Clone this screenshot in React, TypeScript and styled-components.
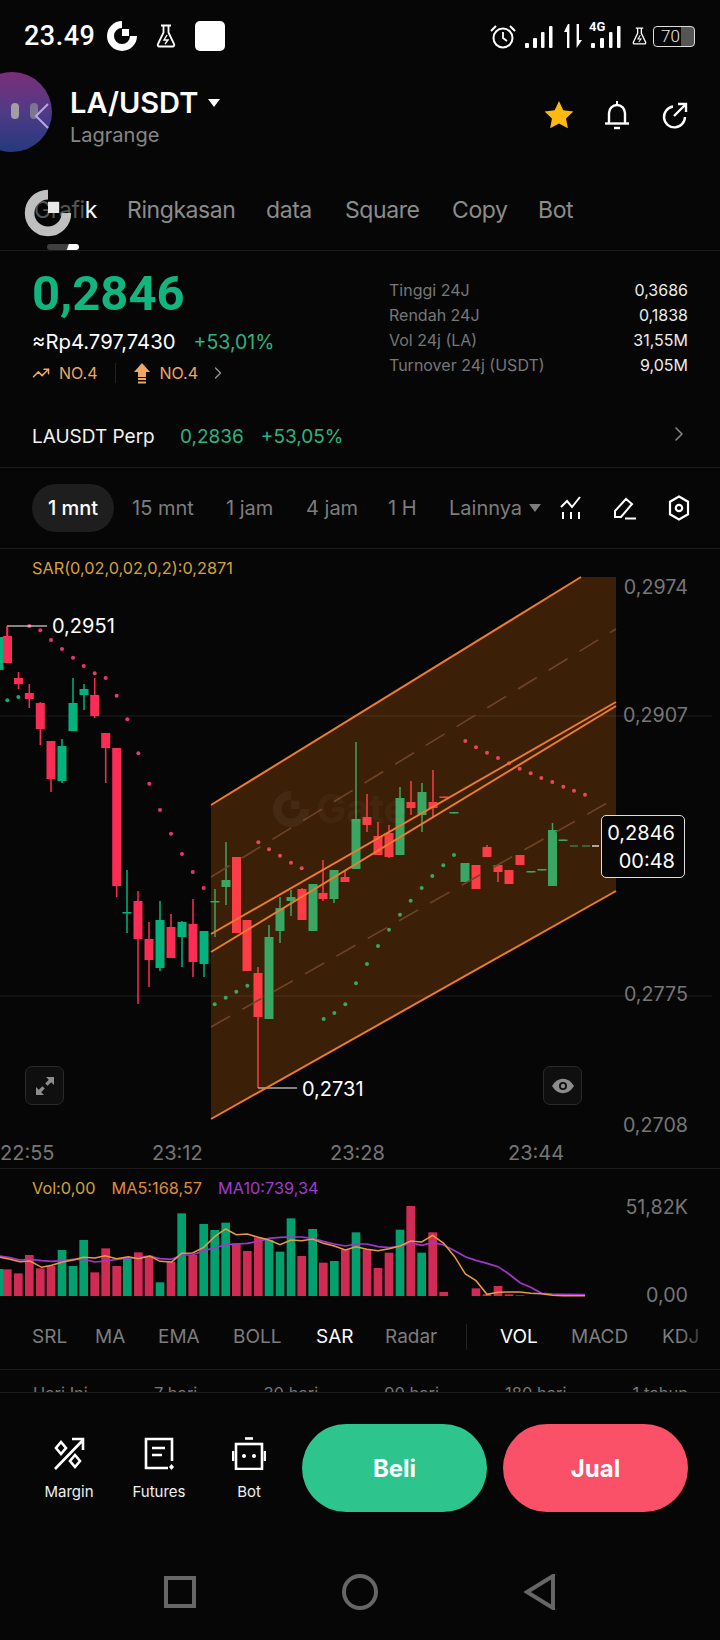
import { createGlobalStyle, styled } from "styled-components";
import { ChevronRight, TrendingUp } from "lucide-react";

const GlobalStyle = createGlobalStyle`
  html, body {
    margin: 0;
    padding: 0;
    background: #060606;
  }
  * {
    box-sizing: border-box;
  }
`;

const Page = styled.div`
  position: relative;
  width: 720px;
  height: 1640px;
  overflow: hidden;
  display: flex;
  flex-direction: column;
  background: #060606;
  color: #fff;
  font-family: Inter, "Liberation Sans", sans-serif;
`;

/* status bar */
const StatusBar = styled.div`
  height: 72px;
  flex: none;
  display: flex;
  align-items: center;
  padding: 0 25px 0 24px;
`;
const Clock = styled.span`
  font-size: 27px;
  font-weight: 500;
  width: 83px;
  font-family: Roboto, sans-serif;
  letter-spacing: 0.5px;
`;
const StatusLeft = styled.div`
  display: flex;
  align-items: center;
  gap: 19px;
`;
const WhiteSquare = styled.div`
  width: 30px;
  height: 30px;
  border-radius: 5px;
  background: #fff;
`;
const StatusRight = styled.div`
  margin-left: auto;
  display: flex;
  align-items: center;
`;
const StatusSlot = styled.span<{ $ml: number }>`
  position: relative;
  display: flex;
  margin-left: ${(p) => p.$ml}px;
`;
const NetworkTag = styled.span`
  position: absolute;
  left: 0;
  top: -3px;
  font-family: Roboto, sans-serif;
  font-size: 13px;
  font-weight: 700;
  line-height: 14px;
`;
const Battery = styled.div`
  width: 42px;
  height: 21px;
  border: 1.5px solid #ddd;
  border-radius: 4px;
  margin-left: 6px;
  display: flex;
  align-items: center;
  padding-left: 7px;
  font-size: 17px;
  font-weight: 300;
  font-family: Roboto, sans-serif;
  color: #eee;
  background: linear-gradient(90deg, #060606 68%, #555 68%);
`;

/* header */
const Header = styled.div`
  height: 80px;
  flex: none;
  display: flex;
  align-items: center;
  padding-right: 32px;
`;
const Avatar = styled.div`
  position: relative;
  width: 80px;
  height: 80px;
  margin-left: -28px;
  margin-right: 18px;
  border-radius: 50%;
  flex: none;
  background: linear-gradient(180deg, #7a2f78 0%, #503a86 50%, #243a7c 100%);
`;
const AvatarPill = styled.span<{ $x: number; $dim?: boolean }>`
  position: absolute;
  left: ${(p) => p.$x}px;
  top: 31px;
  width: 8px;
  height: 16px;
  border-radius: 4px;
  background: ${(p) => (p.$dim ? "#7d7690" : "#a29ea2")};
`;
const BackIcon = styled.svg`
  position: absolute;
  left: 61px;
  top: 30px;
`;
const TitleBlock = styled.div`
  display: flex;
  flex-direction: column;
  gap: 2px;
  margin-top: 10px;
`;
const PairRow = styled.div`
  display: flex;
  align-items: center;
  gap: 10px;
`;
const Pair = styled.span`
  font-size: 29px;
  font-weight: 600;
  line-height: 34px;
`;
const Caret = styled.span`
  width: 0;
  height: 0;
  border-left: 6px solid transparent;
  border-right: 6px solid transparent;
  border-top: 8px solid ${(p) => p.color || "#fff"};
`;
const CoinName = styled.span`
  font-size: 20px;
  color: #868686;
  line-height: 26px;
`;
const HeaderIcons = styled.div`
  margin-left: auto;
  display: flex;
  align-items: center;
  gap: 31px;
  margin-top: 6px;
`;
const StarIcon = styled.svg`
  margin-right: -2px;
`;

/* tabs */
const Tabs = styled.div`
  position: relative;
  height: 99px;
  flex: none;
  display: flex;
  align-items: flex-start;
  padding: 43px 0 0 34px;
  border-bottom: 1px solid #1c1c1c;
`;
const Tab = styled.span<{ $w: number }>`
  width: ${(p) => p.$w}px;
  flex: none;
  font-size: 23px;
  line-height: 30px;
  color: #8c8c8c;
  letter-spacing: -0.42px;
`;
const TabDim = styled.span`
  color: #555;
`;
const TabLit = styled.span`
  color: #fff;
`;
const Loader = styled.svg`
  position: absolute;
  left: 24px;
  top: 37px;
`;
const TabMark = styled.div`
  position: absolute;
  left: 47px;
  bottom: 0;
  width: 32px;
  height: 6px;
  border-radius: 3px;
  background: linear-gradient(110deg, #3f3f3f 62%, #fff 66%);
`;

/* price block */
const PriceBlock = styled.div`
  height: 166px;
  flex: none;
  display: flex;
  padding: 0 32px;
`;
const PriceLeft = styled.div`
  width: 357px;
  flex: none;
  padding-top: 14px;
`;
const BigPrice = styled.div`
  font-family: Roboto, sans-serif;
  font-size: 49px;
  font-weight: 700;
  line-height: 58px;
  color: #10b57f;
`;
const FiatRow = styled.div`
  display: flex;
  gap: 18px;
  align-items: baseline;
  margin-top: 5px;
  font-size: 20.3px;
  line-height: 28px;
`;
const Green = styled.span<{ $size?: number }>`
  color: #2eb382;
  font-size: ${(p) => p.$size || 19.5}px;
`;
const RankRow = styled.div`
  display: flex;
  align-items: center;
  margin-top: 5px;
  height: 24px;
  color: #eea764;
  font-size: 16px;
`;
const RankText = styled.span`
  margin-left: 9px;
`;
const RankDivider = styled.span`
  width: 1px;
  height: 20px;
  background: #222;
  margin: 0 17px;
`;
const RankArrow = styled(ChevronRight)`
  margin-left: 10px;
`;
const Stats = styled.div`
  flex: 1;
  padding-top: 26px;
  display: flex;
  flex-direction: column;
`;
const StatRow = styled.div`
  height: 25px;
  display: flex;
  align-items: center;
  justify-content: space-between;
  font-size: 16px;
`;
const StatLabel = styled.span`
  color: #777;
`;
const StatValue = styled.span`
  color: #ececec;
`;

/* perp row */
const PerpRow = styled.div`
  height: 51px;
  flex: none;
  display: flex;
  align-items: center;
  padding: 0 32px 12px;
  border-bottom: 1px solid #1c1c1c;
  font-size: 19px;
`;
const PerpName = styled.span`
  width: 148px;
  color: #f2f2f2;
`;
const PerpChange = styled(Green)`
  margin-left: 17px;
`;
const PerpArrow = styled(ChevronRight)`
  margin-left: auto;
  margin-right: -3px;
  margin-top: -4px;
`;

/* interval row */
const Intervals = styled.div`
  position: relative;
  height: 81px;
  flex: none;
  display: flex;
  align-items: center;
  padding: 0 30px 0 32px;
  border-bottom: 1px solid #1c1c1c;
`;
const IntervalPill = styled.span`
  width: 82px;
  height: 48px;
  border-radius: 24px;
  background: #1e1e1e;
  display: flex;
  align-items: center;
  justify-content: center;
  font-size: 20px;
  font-weight: 500;
  margin-right: 18px;
`;
const Interval = styled.span<{ $w: number }>`
  width: ${(p) => p.$w}px;
  flex: none;
  font-size: 20px;
  color: #7d7d7d;
  white-space: nowrap;
`;
const IntervalIcons = styled.div`
  margin-left: auto;
  display: flex;
  align-items: center;
  gap: 31px;
`;
const MoreCaret = styled(Caret)`
  margin-left: 11px;
`;

/* chart */
const ChartArea = styled.div`
  position: relative;
  height: 620px;
  flex: none;
  border-bottom: 1px solid #1c1c1c;
  font-size: 20px;
`;
const ChartSvg = styled.svg`
  position: absolute;
  left: 0;
  top: 0;
`;
const Legend = styled.div`
  position: absolute;
  left: 32px;
  top: 9px;
  font-size: 16.3px;
  color: #d4a23a;
  line-height: 20px;
`;
const AxisLabel = styled.span<{ $y: number }>`
  position: absolute;
  right: 32px;
  top: ${(p) => p.$y - 549 - 13}px;
  line-height: 26px;
  font-size: 19.7px;
  color: #767676;
`;
const TimeLabel = styled.span<{ $x: number }>`
  position: absolute;
  left: ${(p) => p.$x}px;
  top: 591px;
  line-height: 26px;
  font-size: 20px;
  color: #767676;
`;
const Extreme = styled.span<{ $x: number; $y: number }>`
  position: absolute;
  left: ${(p) => p.$x}px;
  top: ${(p) => p.$y - 549 - 13}px;
  line-height: 26px;
  font-size: 20px;
  color: #fff;
`;
const PriceTag = styled.div`
  position: absolute;
  left: 601px;
  top: 266px;
  width: 84px;
  height: 63px;
  border: 1px solid #ddd;
  border-radius: 5px;
  background: #060606;
  padding: 3px 9px 0 0;
  text-align: right;
  font-size: 20px;
  line-height: 28px;
`;
const Watermark = styled.div`
  position: absolute;
  left: 273px;
  top: 238px;
  display: flex;
  align-items: center;
  gap: 7px;
  color: rgba(255, 255, 255, 0.05);
  font-size: 40px;
  font-weight: 700;
  line-height: 44px;
`;
const ChartButton = styled.div<{ $x: number }>`
  position: absolute;
  left: ${(p) => p.$x}px;
  top: 517px;
  width: 39px;
  height: 39px;
  border: 1.5px solid #2a2a2a;
  border-radius: 7px;
  background: #0f0f0f;
  display: flex;
  align-items: center;
  justify-content: center;
`;

/* volume */
const VolumeArea = styled.div`
  position: relative;
  height: 145px;
  flex: none;
`;
const VolLegend = styled.div`
  position: absolute;
  left: 32px;
  top: 9px;
  display: flex;
  gap: 16px;
  font-size: 16.3px;
  line-height: 20px;
`;
const LegendItem = styled.span`
  color: ${(p) => p.color};
`;
const VolAxis = styled.span<{ $y: number }>`
  position: absolute;
  right: 32px;
  top: ${(p) => p.$y - 1169 - 13}px;
  line-height: 26px;
  font-size: 19.7px;
  color: #767676;
`;

/* indicators */
const Indicators = styled.div`
  height: 56px;
  flex: none;
  display: flex;
  align-items: center;
  padding: 0 0 10px 32px;
  border-bottom: 1px solid #1c1c1c;
  font-size: 19px;
  overflow: hidden;
  position: relative;
`;
const Indicator = styled.span<{ $w: number; $on?: boolean }>`
  width: ${(p) => p.$w}px;
  flex: none;
  color: ${(p) => (p.$on ? "#fff" : "#7d7d7d")};
`;
const IndicatorDivider = styled.span`
  width: 1px;
  height: 26px;
  background: #222;
  margin-right: 33px;
  flex: none;
`;
const EdgeFade = styled.div`
  position: absolute;
  right: 0;
  top: 0;
  bottom: 0;
  width: 40px;
  background: linear-gradient(90deg, rgba(6, 6, 6, 0) 0%, #060606 85%);
`;

/* clipped period row */
const Periods = styled.div`
  height: 22px;
  flex: none;
  overflow: hidden;
  display: flex;
  justify-content: space-between;
  padding: 13px 32px 0 33px;
  font-size: 16.5px;
  line-height: 20px;
  color: #777;
`;

/* bottom action bar */
const ActionBar = styled.div`
  height: 148px;
  flex: none;
  display: flex;
  align-items: flex-start;
  padding-top: 31px;
  border-top: 1px solid #1c1c1c;
  background: #060606;
`;
const Shortcuts = styled.div`
  width: 302px;
  flex: none;
  display: flex;
  padding-left: 24px;
`;
const Shortcut = styled.div`
  width: 90px;
  flex: none;
  display: flex;
  flex-direction: column;
  align-items: center;
  gap: 10px;
  padding-top: 13px;
  font-size: 15px;
  line-height: 24px;
  color: #f0f0f0;
`;
const TradeButton = styled.button<{ $bg: string }>`
  width: 185px;
  height: 88px;
  border: none;
  border-radius: 44px;
  flex: none;
  background: ${(p) => p.$bg};
  color: #fff;
  font-family: inherit;
  font-size: 24px;
  font-weight: 700;
  & + & {
    margin-left: 16px;
  }
`;
const NavBar = styled.div`
  flex: 1;
  display: flex;
  align-items: center;
  justify-content: center;
  gap: 146px;
  padding-top: 4px;
`;

const GateMark = ({ size, color, notch }: { size: number; color: string; notch?: string }) => (
  <svg width={size} height={size} viewBox="0 0 30 30">
    <path d="M15 3.500 A11.500 11.500 0 1 0 26.500 15" fill="none" stroke={color} strokeWidth="7" />
    <rect x="15" y="8" width="7" height="7" fill={notch || color} />
  </svg>
);

const FlaskIcon = ({ w, h }: { w: number; h: number }) => (
  <svg width={w} height={h} viewBox="0 0 20 24" fill="none" stroke="#fff" strokeWidth="1.8">
    <path d="M5 1.500h10M7.500 1.500v7L2 20a1.600 1.600 0 0 0 1.500 2.500h13A1.600 1.600 0 0 0 18 20L12.500 8.500v-7" />
    <path d="M11 11l-3 5h4l-3 4" strokeWidth="1.4" />
  </svg>
);

const Bars = ({ tag }: { tag?: boolean }) => (
  <svg width={tag ? 32 : 29} height="26" viewBox={tag ? "0 0 32 26" : "0 0 29 26"} fill="#fff">
    <rect x={tag ? 2 : 1} y="20" width="4" height="5" rx="1" />
    <rect x={tag ? 11 : 9} y="15" width="4" height="10" rx="1" />
    <rect x={tag ? 20 : 17} y="9" width="3.500" height="16" rx="1" />
    <rect x={tag ? 28 : 25} y="3" width="3.500" height="22" rx="1" />
  </svg>
);

type Candle = [number, number, number, number, number, "r" | "g"];

const candles: Candle[] = [
  [-1, 637, 670, 637, 670, "g"],
  [7.5, 636, 663, 626, 663, "r"],
  [18.5, 678, 684, 672, 689, "r"],
  [29.3, 693, 699, 684, 708, "r"],
  [40.3, 703, 729, 702, 745, "r"],
  [51, 741, 779, 741, 792, "r"],
  [62, 746, 781, 739, 783, "g"],
  [73, 703, 731, 678, 731, "g"],
  [84, 689, 695, 684, 710, "g"],
  [94.7, 695, 716, 678, 718, "r"],
  [105.7, 733, 748, 733, 783, "r"],
  [116.7, 748, 886, 748, 897, "r"],
  [127, 912, 913.5, 870, 933, "g"],
  [138, 901, 939, 891, 1004, "r"],
  [149, 939, 960, 922, 987, "r"],
  [160, 920, 968, 901, 971, "g"],
  [171, 927, 958, 914, 958, "r"],
  [182, 922, 937, 921, 967, "g"],
  [193, 924, 962, 899, 977, "r"],
  [204, 931, 964, 931, 977, "g"],
  [215, 901, 902.5, 889, 937, "g"],
  [226, 880, 887, 842, 905, "g"],
  [236.5, 857, 933, 857, 933, "r"],
  [247, 920, 971, 920, 971, "r"],
  [258, 973, 1017, 967, 1088, "r"],
  [269, 937, 1019, 925, 1019, "g"],
  [280, 908, 931, 897, 943, "g"],
  [291, 897, 901, 890, 916, "g"],
  [302, 889, 920, 888, 920, "r"],
  [313, 884, 931, 884, 931, "g"],
  [323, 893, 899, 860, 901, "r"],
  [334, 870, 899, 870, 903, "g"],
  [345, 877, 882, 870, 882, "r"],
  [356, 819, 869, 742, 869, "g"],
  [367, 817, 825, 794, 832, "r"],
  [378, 836, 855, 822, 855, "r"],
  [389, 833, 857, 825, 858, "r"],
  [400, 798, 855, 787, 855, "g"],
  [411, 802, 808, 781, 815, "r"],
  [422, 792, 815, 783, 832, "g"],
  [433, 802, 808, 770, 818, "r"],
  [444, 796.5, 798, 796.5, 798, "r"],
  [454, 812, 813.5, 812, 813.5, "g"],
  [465, 863, 882, 863, 882, "g"],
  [476, 865, 889, 865, 889, "r"],
  [487, 847, 857, 845, 857, "r"],
  [498, 865, 872, 865, 882, "r"],
  [509, 870, 884, 870, 884, "r"],
  [520, 855, 865, 855, 865, "r"],
  [531, 871, 872.5, 871, 872.5, "g"],
  [542, 869, 870.5, 869, 870.5, "g"],
  [552.5, 830, 886, 823, 886, "g"],
  [563, 839.5, 841, 839.5, 841, "g"],
];

const fromCrop = (pts: number[][], ox: number, oy: number) =>
  pts.map(([x, y]) => [ox + x / 3, oy + y / 3]);

const redDots = [
  ...fromCrop(
    [[88, 228], [121, 241], [153, 270], [186, 297], [219, 323], [251, 348], [284, 370], [317, 384], [350, 437], [382, 508], [415, 610], [448, 701], [480, 780], [513, 851], [546, 912], [775, 877], [807, 898], [840, 917], [873, 938], [905, 955]],
    0,
    550
  ),
  ...fromCrop([[578, 36], [611, 84]], 0, 860),
  ...fromCrop(
    [[316, 573], [348, 592], [381, 608], [414, 624], [447, 640], [479, 656], [512, 670], [544, 684], [577, 696], [610, 710], [642, 722], [675, 734]],
    360,
    550
  ),
];

const greenDots = [
  ...fromCrop([[22, 451], [55, 441]], 0, 550),
  ...fromCrop([[644, 433], [677, 413], [709, 395], [742, 377], [971, 477], [1003, 459], [1036, 433], [1068, 370]], 0, 860),
  ...fromCrop([[21, 312], [54, 258], [87, 209], [120, 164], [152, 122], [185, 84], [217, 48], [250, 16]], 360, 860),
  [454, 855],
];

const volBars: [number, number, "r" | "g"][] = [
  ...([[-4, 327, "g"], [22, 328, "r"], [55, 340, "r"], [88, 285, "r"], [121, 325, "r"], [153, 318, "r"], [186, 270, "g"], [219, 318, "g"], [251, 240, "g"], [284, 337, "r"], [317, 265, "r"], [350, 318, "r"], [382, 295, "g"], [415, 277, "r"], [447, 287, "r"], [480, 367, "g"], [513, 305, "r"], [545, 160, "g"], [578, 285, "r"], [611, 192, "g"], [644, 210, "g"], [677, 188, "g"], [709, 250, "r"], [742, 273, "r"], [775, 232, "r"], [807, 240, "g"], [840, 275, "g"], [873, 175, "g"], [905, 288, "r"], [938, 207, "g"], [970, 308, "r"], [1003, 303, "g"], [1036, 268, "r"], [1068, 217, "g"]] as [number, number, "r" | "g"][]),
  ...([[21, 268, "r"], [54, 324, "r"], [87, 278, "r"], [120, 209, "g"], [152, 138, "r"], [185, 278, "g"], [218, 217, "r"], [251, 396, "r"], [348, 385, "r"], [381, 403, "r"], [414, 378, "r"], [447, 403, "r"], [480, 406, "r"]] as [number, number, "r" | "g"][]).map(
    ([x, y, c]) => [x + 1080, y, c] as [number, number, "r" | "g"]
  ),
];

const ma5 = "0,292 30,298 60,305 90,303 125,322 155,316 190,305 220,300 250,292 285,294 315,287 350,296 385,290 415,296 450,288 480,304 515,306 545,280 578,279 611,262 644,230 677,207 709,224 742,222 775,232 807,240 840,254 873,240 905,242 938,237 970,250 1003,258 1036,270 1068,260 1101,268 1134,272 1167,266 1200,258 1232,243 1265,246 1298,226 1331,250 1364,290 1396,342 1428,362 1461,403 1494,397 1527,396 1560,396 1592,400 1625,401 1657,406 1690,407 1755,407";
const ma10 = "0,288 30,293 60,300 90,298 125,302 155,304 190,302 220,298 250,298 285,306 315,303 350,298 385,294 415,293 450,289 480,296 515,298 545,285 578,285 611,272 644,264 677,254 709,252 742,250 775,244 807,235 840,232 873,231 905,231 938,235 970,244 1003,252 1036,258 1068,252 1101,252 1134,260 1167,263 1200,260 1232,248 1265,256 1298,247 1331,255 1364,272 1396,290 1428,301 1461,310 1494,320 1527,342 1560,368 1592,382 1625,400 1657,402 1690,403 1755,404";

const intervals: [string, number][] = [
  ["15 mnt", 94],
  ["1 jam", 80],
  ["4 jam", 82],
  ["1 H", 61],
];

const indicators: [string, number, boolean?][] = [
  ["SRL", 63],
  ["MA", 63],
  ["EMA", 75],
  ["BOLL", 83],
  ["SAR", 69, true],
  ["Radar", 81],
];

export default function App() {
  return (
    <Page>
      <GlobalStyle />
      <StatusBar>
        <Clock>23.49</Clock>
        <StatusLeft>
          <GateMark size={30} color="#fff" />
          <FlaskIcon w={20} h={24} />
          <WhiteSquare />
        </StatusLeft>
        <StatusRight>
          <svg width="28" height="25" viewBox="0 0 28 25" fill="none" stroke="#fff" strokeWidth="2">
            <circle cx="14" cy="14" r="9.500" />
            <path d="M14 8v6l4 3" strokeWidth="1.8" />
            <path d="M2 7l5-5M26 7l-5-5" />
          </svg>
          <StatusSlot $ml={7}>
            <Bars />
          </StatusSlot>
          <StatusSlot $ml={10}>
            <svg width="20" height="26" viewBox="0 0 20 26" fill="#fff">
              <path d="M5 1L1 9h3v16h2.400V1z" />
              <path d="M13.600 1h2.400v16h3l-5.400 8z" />
            </svg>
          </StatusSlot>
          <StatusSlot $ml={6}>
            <NetworkTag>4G</NetworkTag>
            <Bars tag />
          </StatusSlot>
          <StatusSlot $ml={11}>
            <FlaskIcon w={15} h={20} />
          </StatusSlot>
          <Battery>70</Battery>
        </StatusRight>
      </StatusBar>

      <Header>
        <Avatar>
          <AvatarPill $x={39} />
          <AvatarPill $x={58} $dim />
          <BackIcon width="18" height="28" viewBox="0 0 18 28" fill="none" stroke="#b9a6e6" strokeWidth="2">
            <path d="M15 2L3 14l12 12" />
          </BackIcon>
        </Avatar>
        <TitleBlock>
          <PairRow>
            <Pair>LA/USDT</Pair>
            <Caret />
          </PairRow>
          <CoinName>Lagrange</CoinName>
        </TitleBlock>
        <HeaderIcons>
          <StarIcon width="32" height="30" viewBox="0 0 24 23" fill="#fdb90f">
            <path d="M12 .8l3.300 7 7.700 1-5.600 5.300 1.400 7.600L12 18l-6.800 3.700 1.400-7.600L1 8.800l7.700-1z" />
          </StarIcon>
          <svg width="26" height="30" viewBox="0 0 26 30" fill="none" stroke="#fff" strokeWidth="2.400">
            <path d="M5 23V13a8 8 0 0 1 16 0v10" />
            <path d="M1 23.500h24" />
            <path d="M13 1v4" strokeWidth="2" />
            <path d="M10 28h6" />
          </svg>
          <svg width="27" height="27" viewBox="0 0 27 27" fill="none" stroke="#fff" strokeWidth="2.400">
            <path d="M12 4.500A10.500 10.500 0 1 0 24 15" />
            <path d="M13 14L24.500 2.500M17 2h8v8" />
          </svg>
        </HeaderIcons>
      </Header>

      <Tabs>
        <Tab $w={93}>
          <TabDim>Grafi</TabDim>
          <TabLit>k</TabLit>
        </Tab>
        <Tab $w={139}>Ringkasan</Tab>
        <Tab $w={79}>data</Tab>
        <Tab $w={107}>Square</Tab>
        <Tab $w={86}>Copy</Tab>
        <Tab $w={50}>Bot</Tab>
        <Loader width="48" height="48" viewBox="0 0 30 30">
          <path d="M15 3.500 A11.500 11.500 0 1 0 26.500 15" fill="none" stroke="#cfcfcf" strokeWidth="6" opacity="0.92" />
          <rect x="15" y="8" width="7" height="7" fill="#e8e8e8" />
        </Loader>
        <TabMark />
      </Tabs>

      <PriceBlock>
        <PriceLeft>
          <BigPrice>0,2846</BigPrice>
          <FiatRow>
            <span>≈Rp4.797,7430</span>
            <Green>+53,01%</Green>
          </FiatRow>
          <RankRow>
            <TrendingUp size={18} color="#eea764" strokeWidth={2} />
            <RankText>NO.4</RankText>
            <RankDivider />
            <svg width="18" height="21" viewBox="0 0 18 21" fill="#eea764">
              <path d="M9 0l8 9h-4v5H5V9H1z" />
              <rect x="5" y="15" width="8" height="2" />
              <rect x="5" y="18.500" width="8" height="2" />
            </svg>
            <RankText>NO.4</RankText>
            <RankArrow size={20} color="#999" strokeWidth={1.5} />
          </RankRow>
        </PriceLeft>
        <Stats>
          <StatRow>
            <StatLabel>Tinggi 24J</StatLabel>
            <StatValue>0,3686</StatValue>
          </StatRow>
          <StatRow>
            <StatLabel>Rendah 24J</StatLabel>
            <StatValue>0,1838</StatValue>
          </StatRow>
          <StatRow>
            <StatLabel>Vol 24j (LA)</StatLabel>
            <StatValue>31,55M</StatValue>
          </StatRow>
          <StatRow>
            <StatLabel>Turnover 24j (USDT)</StatLabel>
            <StatValue>9,05M</StatValue>
          </StatRow>
        </Stats>
      </PriceBlock>

      <PerpRow>
        <PerpName>LAUSDT Perp</PerpName>
        <Green $size={19}>0,2836</Green>
        <PerpChange $size={19}>+53,05%</PerpChange>
        <PerpArrow size={24} color="#8a8a8a" strokeWidth={1.5} />
      </PerpRow>

      <Intervals>
        <IntervalPill>1 mnt</IntervalPill>
        {intervals.map(([label, w]) => (
          <Interval key={label} $w={w}>
            {label}
          </Interval>
        ))}
        <Interval $w={69}>Lainnya</Interval>
        <MoreCaret color="#7d7d7d" />
        <IntervalIcons>
          <svg width="22" height="24" viewBox="0 0 22 24" fill="none" stroke="#fff" strokeWidth="2">
            <path d="M1 11l6-6 5 6 8-10" />
            <path d="M3 16v7M11 16v7M19 16v7" />
          </svg>
          <svg width="24" height="24" viewBox="0 0 24 24" fill="none" stroke="#fff" strokeWidth="2">
            <path d="M2 22V15L13 3l6 5L8 21H2z" />
            <path d="M12 22.500h11" />
          </svg>
          <svg width="22" height="26" viewBox="0 0 22 26" fill="none" stroke="#fff" strokeWidth="2.200">
            <path d="M11 1.500l9 5.200v12.600l-9 5.200-9-5.200V6.700z" />
            <circle cx="11" cy="13" r="3.200" />
          </svg>
        </IntervalIcons>
      </Intervals>

      <ChartArea>
        <ChartSvg width="720" height="619" viewBox="0 549 720 619">
          <path d="M0 716H712M0 996H712" stroke="#1f1f1f" strokeWidth="1" />
          {candles.map(([x, top, bottom, wt, wb, c], i) => {
            const col = c === "r" ? "#fb2c55" : "#03b27c";
            return (
              <g key={i} fill={col}>
                <rect x={x - 0.75} y={wt} width="1.5" height={wb - wt} />
                <rect x={x - 4.5} y={top} width="9" height={bottom - top} />
              </g>
            );
          })}
          {redDots.map(([x, y], i) => (
            <circle key={i} cx={x} cy={y} r="2" fill="#e8386a" />
          ))}
          {greenDots.map(([x, y], i) => (
            <circle key={i} cx={x} cy={y} r="2" fill="#03b27c" />
          ))}
          <path d="M7 626H47M258 1088H297" stroke="#fff" strokeWidth="1.2" />
          <path d="M7 626v10" stroke="#fb2c55" strokeWidth="1.5" />
          <polygon points="211,805 581,577 616,577 616,891 211,1119" fill="rgb(255,125,15)" fillOpacity="0.22" />
          <path d="M211 805L581 577M211 1119L616 891" stroke="#ee7b2c" strokeWidth="2" fill="none" />
          <path d="M211 934L616 702M211 952L616 706" stroke="#ee7b2c" strokeWidth="2" fill="none" />
          <path
            d="M211 877L616 629M211 1027L616 798"
            stroke="#6e4426"
            strokeWidth="1.6"
            strokeDasharray="22 14"
            fill="none"
          />
          <path d="M570 846h8M582 846h8" stroke="#35a868" strokeWidth="1.2" />
          <path d="M592 846h7" stroke="#fff" strokeWidth="1.2" />
        </ChartSvg>
        <Watermark>
          <GateMark size={36} color="rgba(255,255,255,0.05)" />
          <span>Gate</span>
        </Watermark>
        <Legend>SAR(0,02,0,02,0,2):0,2871</Legend>
        <AxisLabel $y={587}>0,2974</AxisLabel>
        <AxisLabel $y={715}>0,2907</AxisLabel>
        <AxisLabel $y={994}>0,2775</AxisLabel>
        <AxisLabel $y={1125}>0,2708</AxisLabel>
        <Extreme $x={52} $y={626}>0,2951</Extreme>
        <Extreme $x={302} $y={1089}>0,2731</Extreme>
        <PriceTag>
          0,2846
          <br />
          00:48
        </PriceTag>
        <ChartButton $x={25}>
          <svg width="22" height="22" viewBox="0 0 22 22" fill="#8c8c8c">
            <path d="M12 2h8v8l-2.800-2.800-3.600 3.600-2.400-2.400 3.600-3.600z" />
            <path d="M10 20H2v-8l2.800 2.800 3.600-3.600 2.400 2.400-3.600 3.600z" />
          </svg>
        </ChartButton>
        <ChartButton $x={543}>
          <svg width="24" height="16" viewBox="0 0 24 16">
            <path d="M1 8c3-4.800 6.800-7.200 11-7.200S20 3.200 23 8c-3 4.800-6.800 7.200-11 7.200S4 12.800 1 8z" fill="#8c8c8c" />
            <circle cx="12" cy="8" r="4" fill="#0f0f0f" />
            <circle cx="12" cy="8" r="2.200" fill="#8c8c8c" />
          </svg>
        </ChartButton>
        <TimeLabel $x={0}>22:55</TimeLabel>
        <TimeLabel $x={152}>23:12</TimeLabel>
        <TimeLabel $x={330}>23:28</TimeLabel>
        <TimeLabel $x={508}>23:44</TimeLabel>
      </ChartArea>

      <VolumeArea>
        <ChartSvg width="720" height="145" viewBox="0 0 2160 435">
          <g transform="translate(0,-27)">
            {volBars.map(([x, y, c], i) => (
              <rect key={i} x={x - 13} y={y} width="26" height={408 - y} fill={c === "r" ? "#d02b54" : "#029f6f"} />
            ))}
            <polyline points={ma10} fill="none" stroke="#a335cf" strokeWidth="5" />
            <polyline points={ma5} fill="none" stroke="#ea9a3c" strokeWidth="4.500" />
          </g>
        </ChartSvg>
        <VolLegend>
          <LegendItem color="#d4a23a">Vol:0,00</LegendItem>
          <LegendItem color="#e08a3c">MA5:168,57</LegendItem>
          <LegendItem color="#a03bd0">MA10:739,34</LegendItem>
        </VolLegend>
        <VolAxis $y={1207}>51,82K</VolAxis>
        <VolAxis $y={1295}>0,00</VolAxis>
      </VolumeArea>

      <Indicators>
        {indicators.map(([label, w, on]) => (
          <Indicator key={label} $w={w} $on={on}>
            {label}
          </Indicator>
        ))}
        <IndicatorDivider />
        <Indicator $w={71} $on>
          VOL
        </Indicator>
        <Indicator $w={91}>MACD</Indicator>
        <Indicator $w={40}>KDJ</Indicator>
        <EdgeFade />
      </Indicators>

      <Periods>
        <span>Hari Ini</span>
        <span>7 hari</span>
        <span>30 hari</span>
        <span>90 hari</span>
        <span>180 hari</span>
        <span>1 tahun</span>
      </Periods>

      <ActionBar>
        <Shortcuts>
          <Shortcut>
            <svg width="32" height="33" viewBox="0 0 32 33" fill="none" stroke="#fff" strokeWidth="2.600">
              <path d="M2 32L30 3M19 2h11v11" />
              <path d="M8 5l5 6-5 6-5-6z" />
              <path d="M22 18l5 6-5 6-5-6z" />
            </svg>
            Margin
          </Shortcut>
          <Shortcut>
            <svg width="32" height="33" viewBox="0 0 32 33" fill="none" stroke="#fff" strokeWidth="2.600">
              <path d="M29 24V2H3v29h22" />
              <path d="M9 11h13M9 18h10" />
              <path d="M28.500 27l2.500 3-2.500 3-2.500-3z" fill="#fff" stroke="none" />
            </svg>
            Futures
          </Shortcut>
          <Shortcut>
            <svg width="34" height="33" viewBox="0 0 34 33" fill="none" stroke="#fff" strokeWidth="2.600">
              <path d="M13 1.500h8" />
              <rect x="4" y="7" width="26" height="25" />
              <path d="M1 14v10M33 14v10" />
              <circle cx="12" cy="19" r="2" fill="#fff" stroke="none" />
              <circle cx="22" cy="19" r="2" fill="#fff" stroke="none" />
            </svg>
            Bot
          </Shortcut>
        </Shortcuts>
        <TradeButton $bg="#2dc48d">Beli</TradeButton>
        <TradeButton $bg="#fb5168">Jual</TradeButton>
      </ActionBar>

      <NavBar>
        <svg width="32" height="32" viewBox="0 0 32 32" fill="none" stroke="#666" strokeWidth="4">
          <rect x="2" y="2" width="28" height="28" />
        </svg>
        <svg width="36" height="36" viewBox="0 0 36 36" fill="none" stroke="#666" strokeWidth="4">
          <circle cx="18" cy="18" r="16" />
        </svg>
        <svg width="32" height="36" viewBox="0 0 32 36" fill="none" stroke="#666" strokeWidth="4">
          <path d="M29 2v32L3 18z" />
        </svg>
      </NavBar>
    </Page>
  );
}
